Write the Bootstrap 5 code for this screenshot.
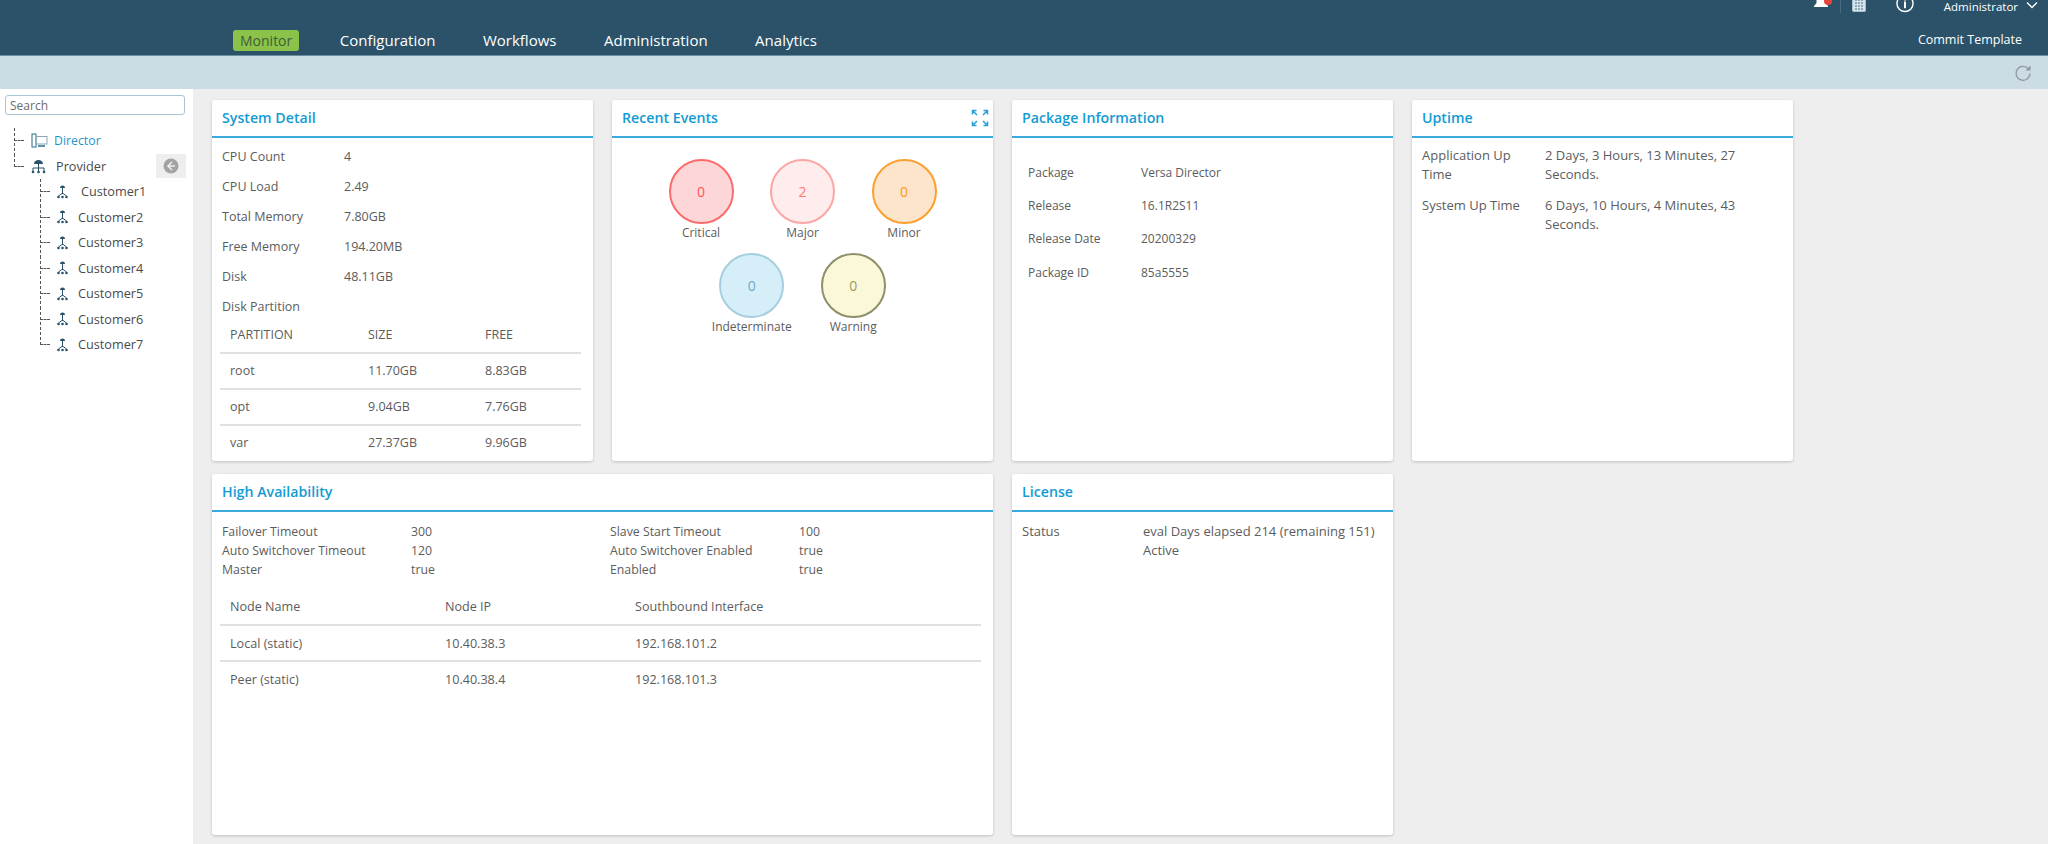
<!DOCTYPE html>
<html lang="en">
<head>
<meta charset="utf-8">
<title>Monitor</title>
<link href="https://cdn.jsdelivr.net/npm/bootstrap@5.3.0/dist/css/bootstrap.min.css" rel="stylesheet">
<style>
html,body{height:844px;overflow:hidden}
body{font-family:"Open Sans",sans-serif;font-size:12px;color:#5c5c5c;background:#eeeeee}
.topbar{background:#2b5269;height:56px;border-bottom:1px solid #6d8ea1;color:#fff}
.toprow{height:13px;overflow:hidden;padding-right:10px}
.toprow .admin{font-size:11.5px;line-height:12px;margin-left:29px}
.tsep{width:1px;height:13px;background:#496b80;margin-left:7px}
.ic-doc{margin-left:10px}
.ic-info{margin-left:28px}
.ic-chev{margin:0 0 4px 8px}
.mainnav{padding-left:233px;gap:33.5px;height:41px;align-items:flex-start;margin-top:2px}
.mainnav .nav-link{color:#fff;font-size:15px;line-height:21px;padding:0 7px;margin-top:14.5px;border-radius:3px}
.mainnav .nav-link.active{background:#8bc34a;color:#3f5d36;font-size:14px}
.commit{font-size:12.5px;color:#fff;padding-right:26px;margin-top:17px;line-height:20px}
.subbar{height:33px;background:#ccdce4;padding-right:16px}
.shell{height:755px}
.sidepane{width:193px;background:#fff;padding:6px 8px 0 5px;flex:none}
.searchbox.form-control{height:20px;font-size:12px;padding:0 4px;border:1px solid #a9c6d6;border-radius:3px;color:#5c5c5c;box-shadow:none}
.searchbox::placeholder{color:#6b6b6b}
.treewrap{margin:13px 0 0 9px;font-size:12.7px;color:#4a4a4a}
.treelist{list-style:none;margin:0;padding:0}
.treerow{display:flex;align-items:center;height:25.5px;background:repeating-linear-gradient(#555 0 3px,transparent 3px 5px) 0 0/1px 100% no-repeat}
.treelast{background-size:1px 50%}
.tick{width:10px;border-top:1px dashed #555;margin-right:7px;flex:none}
.sublist{margin-left:26px}
.sublist .tick{margin-right:7px}
.cname{margin-left:10px}
.cname-first{margin-left:13px}
.provname{margin-left:10px}
.collapser{width:30px;height:24px;background:#eee;margin-left:auto;display:flex;align-items:center;justify-content:center;margin-right:-1px}
.dirlink{color:#1e94cf;margin-left:6px;font-size:12.3px}
.dash{display:grid;grid-template-columns:repeat(4,381px);grid-template-rows:361px 361px;column-gap:19px;row-gap:13px;padding:11px 0 0 19px;height:755px;align-content:start}
.panel.card{border:0;border-radius:3px;box-shadow:0 1px 3px rgba(0,0,0,.2);color:#5c5c5c;overflow:hidden}
.panel .card-header{background:#fff;border:0;border-bottom:2px solid #3aa9dc;border-radius:0;height:38px;padding:0 10px;display:flex;align-items:center;justify-content:space-between;font-size:14.2px;font-weight:600;color:#139bd4}
.panel .card-header svg{margin-right:-6px}
.panel .card-body{padding:0}
.span2{grid-column:span 2}
.dl-row{display:flex;height:30px;align-items:center;padding-left:10px}
.dl-row .lbl{width:122px}
.sysbody{padding-top:4.5px!important;font-size:12.500px}
.parts{margin:0;width:361px;font-size:12.500px;table-layout:fixed}
.parts th,.parts td{font-weight:400;color:#5c5c5c;padding:0 0 0 10px;height:36px;border-bottom:2px solid #e0e0e0;vertical-align:middle;background:transparent}
.parts thead th{height:30.5px;padding-bottom:4px}
.parts tr:last-child td{border-bottom:0}
.evs{padding:21px 22px 0!important;display:flex;flex-wrap:wrap;justify-content:center;align-content:flex-start;row-gap:10px}
.evcell{width:101.5px;text-align:center;line-height:18px;height:84px}
.ball{width:65px;height:65px;border-radius:50%;margin:0 auto 0;display:flex;align-items:center;justify-content:center;font-size:14px;border:2px solid}
.b-crit{background:#fdd7d7;border-color:#fb6b6b;color:#f55}
.b-maj{background:#ffecec;border-color:#fca5a5;color:#f77}
.b-min{background:#fde5cc;border-color:#fb9f2f;color:#f9992a}
.b-ind{background:#d6eef8;border-color:#a5cfdf;color:#6ea9c4}
.b-war{background:#fbf8d9;border-color:#8f9069;color:#9a9a60}
.pkg{padding-top:18px!important}
.pkg .pk{display:flex;height:33.4px;align-items:center;padding-left:16px}
.pkg .lbl{width:113px}
.upt{padding:8px 10px 0!important;line-height:19px;font-size:13px}
.upt .ur{display:flex;margin-bottom:12px}
.upt .lbl{width:123px;padding-right:16px;flex:none}
.ha{padding:10px 0 0 10px!important;line-height:19px;font-size:12.3px}
.hagrid{display:grid;grid-template-columns:189px 199px 189px 1fr}
.hatable{margin:10px 0 0 -2px;width:761px;table-layout:fixed;font-size:12.6px}
.hatable th,.hatable td{font-weight:400;color:#5c5c5c;padding:0 0 0 10px;height:36px;border-bottom:2px solid #e0e0e0;vertical-align:middle;background:transparent}
.hatable tr:last-child td{border-bottom:0}
.hatable .c1{width:215px}
.hatable .c2{width:190px}
.parts .c1{width:138px}
.parts .c2{width:117px}
.lic{padding:10px 10px 0!important;display:flex;line-height:19px;font-size:13px}
.lic .lbl{width:121px;flex:none}
</style>
</head>
<body>
<header class="topbar">
  <div class="toprow d-flex justify-content-end align-items-end">
    <svg width="20" height="18" viewBox="0 0 20 18"><path d="M8 0c-3 0-4.500 2-4.500 5v3L1 11v1h14v-1l-2.500-3V5C12.500 2 11 0 8 0z" fill="#fff"/><circle cx="15" cy="6" r="4" fill="#e8443a"/></svg>
    <span class="tsep"></span>
    <svg class="ic-doc" width="16" height="18" viewBox="0 0 16 18"><rect x="1.500" y="1" width="13" height="15.500" rx="1" fill="#d5e3ea" stroke="#9fc3d4"/><path d="M4 5h8M4 8h8M4 11h8M4 14h8" stroke="#4c7186" stroke-width="1" stroke-dasharray="2 1"/></svg>
    <svg class="ic-info" width="20" height="19" viewBox="0 0 20 20"><circle cx="10" cy="10" r="8.500" fill="none" stroke="#fff" stroke-width="1.500"/><path d="M10 8v7M10 5v1.800" stroke="#fff" stroke-width="2"/></svg>
    <span class="admin">Administrator</span>
    <svg class="ic-chev" width="12" height="8" viewBox="0 0 12 8"><path d="M1 1.500l5 5 5-5" fill="none" stroke="#fff" stroke-width="1.300"/></svg>
  </div>
  <div class="d-flex justify-content-between">
    <ul class="nav mainnav">
      <li class="nav-item"><a class="nav-link active" href="#">Monitor</a></li>
      <li class="nav-item"><a class="nav-link" href="#">Configuration</a></li>
      <li class="nav-item"><a class="nav-link" href="#">Workflows</a></li>
      <li class="nav-item"><a class="nav-link" href="#">Administration</a></li>
      <li class="nav-item"><a class="nav-link" href="#">Analytics</a></li>
    </ul>
    <div class="commit">Commit Template</div>
  </div>
</header>
<div class="subbar d-flex justify-content-end align-items-center">
  <svg width="18" height="18" viewBox="0 0 18 18"><path d="M14.500 5A7 7 0 1 0 16 9.500" fill="none" stroke="#8f9a9f" stroke-width="1.300"/><path d="M16.500 1.500v5h-5z" fill="#8f9a9f"/></svg>
</div>
<div class="shell d-flex">
  <aside class="sidepane">
    <input class="form-control searchbox" type="text" placeholder="Search">
    <div class="treewrap">
      <ul class="treelist">
        <li class="treerow">
          <span class="tick"></span>
          <svg width="17" height="16" viewBox="0 0 17 16"><rect x="1" y="1" width="4" height="13" fill="none" stroke="#2b6a8a"/><rect x="5" y="3.500" width="11" height="7.500" fill="none" stroke="#8aa6b5"/><path d="M7 13h7" stroke="#2b6a8a" stroke-width="1.500"/></svg>
          <span class="dirlink">Director</span>
        </li>
        <li class="treerow treelast">
          <span class="tick"></span>
          <svg width="15" height="15" viewBox="0 0 15 15"><path d="M3 5a4.500 4 0 0 1 9 0z" fill="#2b5269"/><path d="M7.500 5v4M2 12V9h11v3M7.500 9v3" fill="none" stroke="#2b5269"/><circle cx="2" cy="13" r="1.300" fill="#2b5269"/><circle cx="7.500" cy="13" r="1.300" fill="#2b5269"/><circle cx="13" cy="13" r="1.300" fill="#2b5269"/></svg>
          <span class="provname">Provider</span>
          <span class="collapser"><svg width="16" height="16" viewBox="0 0 16 16"><circle cx="8" cy="8" r="7.500" fill="#a3a3a3"/><path d="M9 4L5 8l4 4M5 8h7" fill="none" stroke="#eee" stroke-width="1.500"/></svg></span>
        </li>
      </ul>
      <ul class="treelist sublist">
        <li class="treerow"><span class="tick"></span><svg width="11" height="14" viewBox="0 0 11 14"><path d="M3 3a2.500 2.500 0 0 1 5 0z" fill="#2b5269"/><path d="M5.500 3v6M1.500 11l4-3 4 3" fill="none" stroke="#2b5269"/><circle cx="1.500" cy="12" r="1.300" fill="#2b5269"/><circle cx="5.500" cy="12" r="1.300" fill="#2b5269"/><circle cx="9.500" cy="12" r="1.300" fill="#2b5269"/></svg><span class="cname-first">Customer1</span></li>
        <li class="treerow"><span class="tick"></span><svg width="11" height="14" viewBox="0 0 11 14"><path d="M3 3a2.500 2.500 0 0 1 5 0z" fill="#2b5269"/><path d="M5.500 3v6M1.500 11l4-3 4 3" fill="none" stroke="#2b5269"/><circle cx="1.500" cy="12" r="1.300" fill="#2b5269"/><circle cx="5.500" cy="12" r="1.300" fill="#2b5269"/><circle cx="9.500" cy="12" r="1.300" fill="#2b5269"/></svg><span class="cname">Customer2</span></li>
        <li class="treerow"><span class="tick"></span><svg width="11" height="14" viewBox="0 0 11 14"><path d="M3 3a2.500 2.500 0 0 1 5 0z" fill="#2b5269"/><path d="M5.500 3v6M1.500 11l4-3 4 3" fill="none" stroke="#2b5269"/><circle cx="1.500" cy="12" r="1.300" fill="#2b5269"/><circle cx="5.500" cy="12" r="1.300" fill="#2b5269"/><circle cx="9.500" cy="12" r="1.300" fill="#2b5269"/></svg><span class="cname">Customer3</span></li>
        <li class="treerow"><span class="tick"></span><svg width="11" height="14" viewBox="0 0 11 14"><path d="M3 3a2.500 2.500 0 0 1 5 0z" fill="#2b5269"/><path d="M5.500 3v6M1.500 11l4-3 4 3" fill="none" stroke="#2b5269"/><circle cx="1.500" cy="12" r="1.300" fill="#2b5269"/><circle cx="5.500" cy="12" r="1.300" fill="#2b5269"/><circle cx="9.500" cy="12" r="1.300" fill="#2b5269"/></svg><span class="cname">Customer4</span></li>
        <li class="treerow"><span class="tick"></span><svg width="11" height="14" viewBox="0 0 11 14"><path d="M3 3a2.500 2.500 0 0 1 5 0z" fill="#2b5269"/><path d="M5.500 3v6M1.500 11l4-3 4 3" fill="none" stroke="#2b5269"/><circle cx="1.500" cy="12" r="1.300" fill="#2b5269"/><circle cx="5.500" cy="12" r="1.300" fill="#2b5269"/><circle cx="9.500" cy="12" r="1.300" fill="#2b5269"/></svg><span class="cname">Customer5</span></li>
        <li class="treerow"><span class="tick"></span><svg width="11" height="14" viewBox="0 0 11 14"><path d="M3 3a2.500 2.500 0 0 1 5 0z" fill="#2b5269"/><path d="M5.500 3v6M1.500 11l4-3 4 3" fill="none" stroke="#2b5269"/><circle cx="1.500" cy="12" r="1.300" fill="#2b5269"/><circle cx="5.500" cy="12" r="1.300" fill="#2b5269"/><circle cx="9.500" cy="12" r="1.300" fill="#2b5269"/></svg><span class="cname">Customer6</span></li>
        <li class="treerow treelast"><span class="tick"></span><svg width="11" height="14" viewBox="0 0 11 14"><path d="M3 3a2.500 2.500 0 0 1 5 0z" fill="#2b5269"/><path d="M5.500 3v6M1.500 11l4-3 4 3" fill="none" stroke="#2b5269"/><circle cx="1.500" cy="12" r="1.300" fill="#2b5269"/><circle cx="5.500" cy="12" r="1.300" fill="#2b5269"/><circle cx="9.500" cy="12" r="1.300" fill="#2b5269"/></svg><span class="cname">Customer7</span></li>
      </ul>
    </div>
  </aside>
  <main class="dash flex-grow-1">
    <section class="card panel">
      <div class="card-header">System Detail</div>
      <div class="card-body sysbody">
        <div class="dl-row"><span class="lbl">CPU Count</span><span>4</span></div>
        <div class="dl-row"><span class="lbl">CPU Load</span><span>2.49</span></div>
        <div class="dl-row"><span class="lbl">Total Memory</span><span>7.80GB</span></div>
        <div class="dl-row"><span class="lbl">Free Memory</span><span>194.20MB</span></div>
        <div class="dl-row"><span class="lbl">Disk</span><span>48.11GB</span></div>
        <div class="dl-row"><span class="lbl">Disk Partition</span></div>
        <div class="ps-2">
          <table class="table parts">
            <colgroup><col class="c1"><col class="c2"><col></colgroup>
            <thead><tr><th>PARTITION</th><th>SIZE</th><th>FREE</th></tr></thead>
            <tbody>
              <tr><td>root</td><td>11.70GB</td><td>8.83GB</td></tr>
              <tr><td>opt</td><td>9.04GB</td><td>7.76GB</td></tr>
              <tr><td>var</td><td>27.37GB</td><td>9.96GB</td></tr>
            </tbody>
          </table>
        </div>
      </div>
    </section>
    <section class="card panel">
      <div class="card-header">Recent Events
        <svg width="18" height="18" viewBox="0 0 18 18"><g fill="none" stroke="#2a9fd6" stroke-width="1.500"><path d="M1.500 5.500v-4h4M1.500 1.500l4.500 4.500M16.500 5.500v-4h-4M16.500 1.500L12 6M1.500 12.500v4h4M1.500 16.500L6 12M16.500 12.500v4h-4M16.500 16.500L12 12"/></g></svg>
      </div>
      <div class="card-body evs">
        <div class="evcell"><div class="ball b-crit">0</div>Critical</div>
        <div class="evcell"><div class="ball b-maj">2</div>Major</div>
        <div class="evcell"><div class="ball b-min">0</div>Minor</div>
        <div class="evcell"><div class="ball b-ind">0</div>Indeterminate</div>
        <div class="evcell"><div class="ball b-war">0</div>Warning</div>
      </div>
    </section>
    <section class="card panel">
      <div class="card-header">Package Information</div>
      <div class="card-body pkg">
        <div class="pk"><span class="lbl">Package</span><span>Versa Director</span></div>
        <div class="pk"><span class="lbl">Release</span><span>16.1R2S11</span></div>
        <div class="pk"><span class="lbl">Release Date</span><span>20200329</span></div>
        <div class="pk"><span class="lbl">Package ID</span><span>85a5555</span></div>
      </div>
    </section>
    <section class="card panel">
      <div class="card-header">Uptime</div>
      <div class="card-body upt">
        <div class="ur"><span class="lbl">Application Up Time</span><span>2 Days, 3 Hours, 13 Minutes, 27 Seconds.</span></div>
        <div class="ur"><span class="lbl">System Up Time</span><span>6 Days, 10 Hours, 4 Minutes, 43 Seconds.</span></div>
      </div>
    </section>
    <section class="card panel span2">
      <div class="card-header">High Availability</div>
      <div class="card-body ha">
        <div class="hagrid">
          <span>Failover Timeout</span><span>300</span><span>Slave Start Timeout</span><span>100</span>
          <span>Auto Switchover Timeout</span><span>120</span><span>Auto Switchover Enabled</span><span>true</span>
          <span>Master</span><span>true</span><span>Enabled</span><span>true</span>
        </div>
        <table class="table hatable">
          <colgroup><col class="c1"><col class="c2"><col></colgroup>
          <thead><tr><th>Node Name</th><th>Node IP</th><th>Southbound Interface</th></tr></thead>
          <tbody>
            <tr><td>Local (static)</td><td>10.40.38.3</td><td>192.168.101.2</td></tr>
            <tr><td>Peer (static)</td><td>10.40.38.4</td><td>192.168.101.3</td></tr>
          </tbody>
        </table>
      </div>
    </section>
    <section class="card panel">
      <div class="card-header">License</div>
      <div class="card-body lic"><span class="lbl">Status</span><span>eval Days elapsed 214 (remaining 151)<br>Active</span></div>
    </section>
  </main>
</div>
</body>
</html>
